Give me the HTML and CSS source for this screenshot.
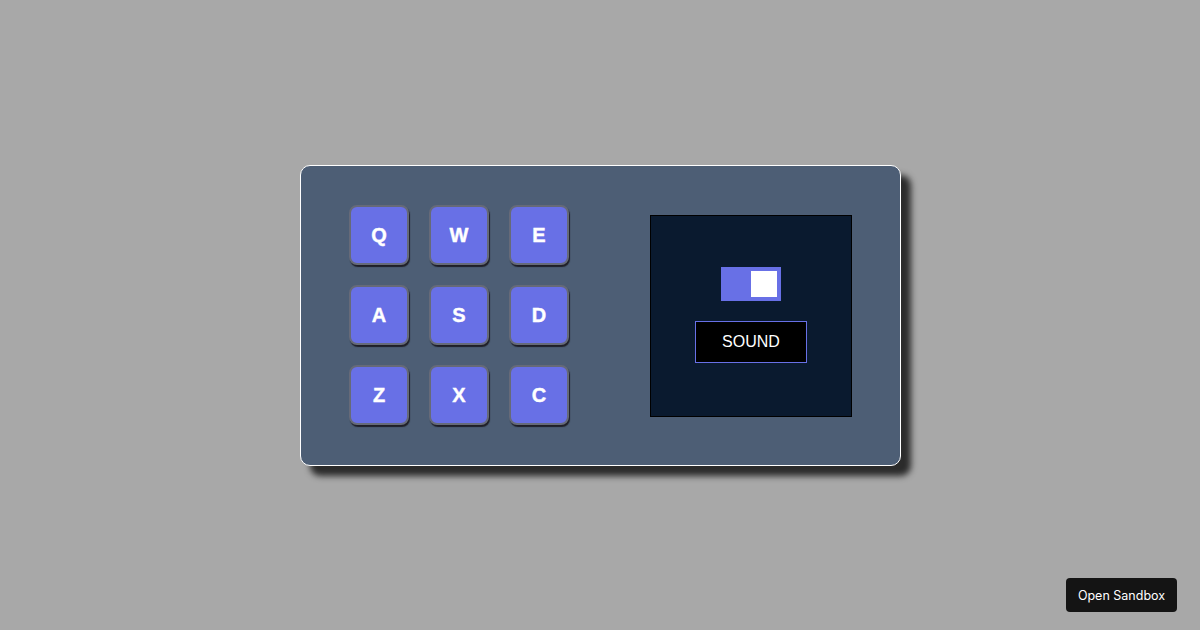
FILE: index.html
```html
<!DOCTYPE html>
<html>
<head>
<meta charset="utf-8">
<link rel="stylesheet" href="styles.css">
</head>
<body>
<div class="stage">
  <div class="machine">
    <div class="pads">
      <div class="pad">Q</div>
      <div class="pad">W</div>
      <div class="pad">E</div>
      <div class="pad">A</div>
      <div class="pad">S</div>
      <div class="pad">D</div>
      <div class="pad">Z</div>
      <div class="pad">X</div>
      <div class="pad">C</div>
    </div>
    <div class="controls">
      <div class="toggle"><div class="knob"></div></div>
      <div class="display">SOUND</div>
    </div>
  </div>
</div>
<div class="sandbox">Open Sandbox</div>
</body>
</html>
```

FILE: styles.css
```css
html, body {
  margin: 0;
  padding: 0;
  width: 1200px;
  height: 630px;
  background: #a8a8a8;
  font-family: "Liberation Sans", Arial, sans-serif;
  overflow: hidden;
}
.stage {
  display: flex;
  padding-top: 165px;
  padding-left: 300px;
}
.machine {
  box-sizing: border-box;
  width: 601px;
  height: 301px;
  background: #4d5e75;
  border: 1px solid #ffffff;
  border-radius: 10px;
  box-shadow: 10px 10px 6px #2b2b2b;
  display: flex;
  align-items: flex-start;
  padding-left: 48px;
}
.pads {
  margin-top: 39px;
  display: grid;
  grid-template-columns: repeat(3, 60px);
  grid-auto-rows: 60px;
  gap: 20px;
}
.pad {
  box-sizing: border-box;
  background: #6870e6;
  border: 2px solid #666a78;
  border-radius: 8px;
  box-shadow: 1px 2px 1px #1f1f28;
  color: #ffffff;
  font-weight: bold;
  font-size: 20px;
  display: flex;
  align-items: center;
  justify-content: center;
  -webkit-text-stroke: 0.4px #ffffff;
}
.controls {
  box-sizing: border-box;
  margin-top: 49px;
  margin-left: 81px;
  width: 202px;
  height: 202px;
  background: #0a1a2f;
  border: 1px solid #000000;
  display: flex;
  flex-direction: column;
  align-items: center;
  padding-top: 51px;
}
.toggle {
  box-sizing: border-box;
  width: 60px;
  height: 34px;
  background: #6870e6;
  padding: 4px 4px 4px 30px;
}
.knob {
  width: 26px;
  height: 26px;
  background: #ffffff;
}
.display {
  box-sizing: border-box;
  margin-top: 20px;
  width: 112px;
  height: 42px;
  background: #000000;
  border: 1px solid #6870e6;
  color: #ffffff;
  font-size: 16px;
  display: flex;
  align-items: center;
  justify-content: center;
}
.sandbox {
  position: absolute;
  left: 1066px;
  top: 578px;
  width: 111px;
  height: 34px;
  box-sizing: border-box;
  background: #141414;
  border-radius: 4px;
  color: #ffffff;
  font-family: "Inter", "Liberation Sans", sans-serif;
  font-size: 12.5px;
  display: flex;
  align-items: center;
  justify-content: center;
}
```
